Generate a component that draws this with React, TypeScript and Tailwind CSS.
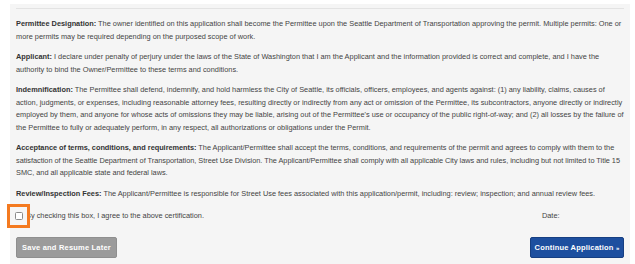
import React, { useState } from 'react';

const terms = [
  {
    label: 'Permittee Designation:',
    text: ' The owner identified on this application shall become the Permittee upon the Seattle Department of Transportation approving the permit. Multiple permits: One or more permits may be required depending on the purposed scope of work.',
  },
  {
    label: 'Applicant:',
    text: ' I declare under penalty of perjury under the laws of the State of Washington that I am the Applicant and the information provided is correct and complete, and I have the authority to bind the Owner/Permittee to these terms and conditions.',
  },
  {
    label: 'Indemnification:',
    text: " The Permittee shall defend, indemnify, and hold harmless the City of Seattle, its officials, officers, employees, and agents against: (1) any liability, claims, causes of action, judgments, or expenses, including reasonable attorney fees, resulting directly or indirectly from any act or omission of the Permittee, its subcontractors, anyone directly or indirectly employed by them, and anyone for whose acts of omissions they may be liable, arising out of the Permittee's use or occupancy of the public right-of-way; and (2) all losses by the failure of the Permittee to fully or adequately perform, in any respect, all authorizations or obligations under the Permit.",
  },
  {
    label: 'Acceptance of terms, conditions, and requirements:',
    text: ' The Applicant/Permittee shall accept the terms, conditions, and requirements of the permit and agrees to comply with them to the satisfaction of the Seattle Department of Transportation, Street Use Division. The Applicant/Permittee shall comply with all applicable City laws and rules, including but not limited to Title 15 SMC, and all applicable state and federal laws.',
    tight: true,
  },
  {
    label: 'Review/Inspection Fees:',
    text: ' The Applicant/Permittee is responsible for Street Use fees associated with this application/permit, including: review; inspection; and annual review fees.',
  },
];

export default function App() {
  const [agreed, setAgreed] = useState(false);

  return (
    <div className="w-[635px] h-[264px] bg-white pt-[4px] pl-[10px] pr-[5px] overflow-hidden" style={{ fontFamily: '"Liberation Sans", Arial, sans-serif' }}>
      <div className="h-[260px] bg-[#f5f5f5] pl-[6px] pr-[6px] pt-[4px]">
        <div className="border-t border-[#e3e3e3]" />
        <div className="pt-[9px] text-[7.36px] leading-[12.5px] text-[#444]">
          {terms.map(term => (
            <p key={term.label} className={term.tight ? 'mb-[8px] tracking-[-0.03px]' : 'mb-[8px]'}>
              <b className="text-[#333]">{term.label}</b>
              {term.text}
            </p>
          ))}
        </div>

        <div className="relative flex items-center h-[14px] mt-[9px] text-[7.36px] text-[#444]">
          <div className="absolute left-[-9px] top-[-5px] w-[23px] h-[24px] bg-[#f47a20] p-[3px]">
            <div className="w-full h-full bg-[#f5f5f5] flex items-center justify-center">
              <input
                type="checkbox"
                checked={agreed}
                onChange={e => setAgreed(e.target.checked)}
                className="appearance-none w-[8px] h-[8px] border border-[#8a8a8a] rounded-[1.5px] bg-white"
              />
            </div>
          </div>
          <span className="pl-[10px]">By checking this box, I agree to the above certification.</span>
          <span className="ml-[338px]">Date:</span>
        </div>

        <div className="flex justify-between mt-[14px]">
          <button className="w-[101px] h-[21px] bg-[#9b9b9b] text-white text-[7.5px] font-bold rounded-[2px] border border-[#8f8f8f] tracking-[0.2px]">
            Save and Resume Later
          </button>
          <button className="w-[94px] h-[21px] bg-[#1d4f9f] text-white text-[7.5px] font-bold rounded-[2px] border border-[#163f82] tracking-[0.2px]">
            Continue Application <span className="text-[6px]">»</span>
          </button>
        </div>
      </div>
    </div>
  );
}
